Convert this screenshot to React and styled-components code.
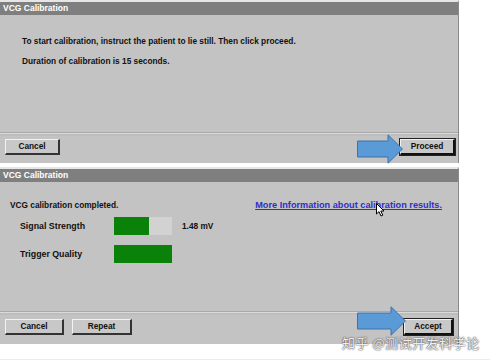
import React from "react";
import styled, { createGlobalStyle } from "styled-components";

const Global = createGlobalStyle`
  body {
    margin: 0;
    background: #fff;
    font-family: "Liberation Sans", Arial, sans-serif;
  }
`;

const Page = styled.div`
  width: 490px;
  height: 362px;
  position: relative;
  overflow: hidden;
  background: #fff;
  display: flex;
  flex-direction: column;
  gap: 4px;
`;

const Dialog = styled.div`
  width: 459px;
  height: ${p => p.h}px;
  box-sizing: border-box;
  background: #c3c3c3;
  border-top: 2px solid #e6e6e6;
  border-right: 1px solid #8a8a8a;
  display: flex;
  flex-direction: column;
  position: relative;
`;

const TitleBar = styled.div`
  height: 13px;
  background: #7f7f7f;
  color: #fff;
  font-weight: bold;
  font-size: 8.5px;
  line-height: 13px;
  padding-left: 3px;
`;

const Content = styled.div`
  flex: 1;
  padding: ${p => p.pad};
  color: #111;
  font-weight: bold;
  font-size: 8.3px;
`;

const Line = styled.div`
  height: 10px;
  line-height: 10px;
  margin-bottom: ${p => p.mb || 0}px;
`;

const HeadRow = styled.div`
  display: flex;
  justify-content: space-between;
  align-items: center;
  height: 10px;
  line-height: 10px;
  padding-right: 16px;
`;

const Link = styled.a`
  color: #3030c8;
  font-size: 9.2px;
  text-decoration: underline;
  cursor: pointer;
`;

const MeterRow = styled.div`
  display: flex;
  align-items: center;
  height: 18px;
  margin-top: ${p => p.mt}px;
  padding-left: 10px;
`;

const Label = styled.div`
  width: 94px;
  font-size: 8.8px;
`;

const Meter = styled.div`
  width: 58px;
  height: 18px;
  background: #d2d2d2;
  display: flex;
`;

const Fill = styled.div`
  background: #0a820a;
  height: 100%;
`;

const Value = styled.div`
  margin-left: 10px;
  font-size: 8.3px;
`;

const Footer = styled.div`
  height: ${p => p.h}px;
  box-sizing: border-box;
  border-top: 1px solid #a9a9a9;
  box-shadow: inset 0 1px 0 #dadada, inset 0 3px 0 #bdbdbd;
  display: flex;
  align-items: center;
  padding: 0 5px 3px 5px;
  gap: 8px;
`;

const Button = styled.button`
  width: ${p => p.w}px;
  height: 16px;
  box-sizing: border-box;
  background: #c8c8c8;
  border-style: solid;
  border-color: #f2f2f2 ${p => (p.def ? "#111" : "#333")} ${p => (p.def ? "#111" : "#333")} #f2f2f2;
  border-width: 1px 2px 2px 1px;
  outline: ${p => (p.def ? "1px solid #222" : "none")};
  font-family: "Liberation Sans", Arial, sans-serif;
  font-weight: bold;
  font-size: 8.3px;
  color: #111;
  padding: 0;
  margin-left: ${p => (p.right ? "auto" : "0")};
  margin-right: ${p => p.mr || 0}px;
`;

const ArrowWrap = styled.svg`
  position: absolute;
  left: ${p => p.x}px;
  top: ${p => p.y}px;
`;

const Cursor = styled.svg`
  position: absolute;
  left: 376px;
  top: 203px;
`;

const Watermark = styled.div`
  position: absolute;
  left: 342px;
  top: 333px;
  color: rgba(255, 255, 255, 0.92);
  font-family: "Noto Sans CJK SC", sans-serif;
  font-size: 13px;
  letter-spacing: 0.5px;
  text-shadow: 0 0 2px #555, 0 0 1px #333;
  white-space: nowrap;
`;

const BottomRule = styled.div`
  position: absolute;
  left: 0;
  top: 359px;
  width: 490px;
  height: 1px;
  background: #ececec;
`;

function Arrow({ x, y, w }) {
  const head = w - 15;
  return (
    <ArrowWrap x={x} y={y} width={w} height="30" viewBox={`0 0 ${w} 30`}>
      <path
        d={`M0.5 7 H${head} V0.8 L${w - 0.5} 15 L${head} 29.2 V23 H0.5 Z`}
        fill="#5a9ad6"
        stroke="#3f72a8"
        strokeWidth="1"
      />
    </ArrowWrap>
  );
}

export default function App() {
  return (
    <Page>
      <Global />
      <Dialog h={163}>
        <TitleBar>VCG Calibration</TitleBar>
        <Content pad="21px 0 0 22px">
          <Line mb={10}>To start calibration, instruct the patient to lie still. Then click proceed.</Line>
          <Line>Duration of calibration is 15 seconds.</Line>
        </Content>
        <Footer h={31}>
          <Button w={55}>Cancel</Button>
          <Button w={55} def right mr={-2}>Proceed</Button>
        </Footer>
      </Dialog>
      <Dialog h={177}>
        <TitleBar>VCG Calibration</TitleBar>
        <Content pad="18px 0 0 10px">
          <HeadRow>
            <span>VCG calibration completed.</span>
            <Link>More Information about calibration results.</Link>
          </HeadRow>
          <MeterRow mt={7}>
            <Label>Signal Strength</Label>
            <Meter>
              <Fill style={{ width: "60%" }} />
            </Meter>
            <Value>1.48 mV</Value>
          </MeterRow>
          <MeterRow mt={10}>
            <Label>Trigger Quality</Label>
            <Meter>
              <Fill style={{ width: "100%" }} />
            </Meter>
          </MeterRow>
        </Content>
        <Footer h={33}>
          <Button w={59}>Cancel</Button>
          <Button w={60}>Repeat</Button>
          <Button w={49} def right>Accept</Button>
        </Footer>
      </Dialog>
      <Arrow x={357} y={134} w={46} />
      <Arrow x={357} y={306} w={49} />
      <Cursor width="10" height="15" viewBox="0 0 10 15">
        <path d="M0.5 0.5 V11 L3 8.6 L5 13 L6.8 12.2 L4.8 8 H8 Z" fill="#fff" stroke="#000" strokeWidth="1" />
      </Cursor>
      <Watermark>知乎 @测试开发科学论</Watermark>
      <BottomRule />
    </Page>
  );
}
